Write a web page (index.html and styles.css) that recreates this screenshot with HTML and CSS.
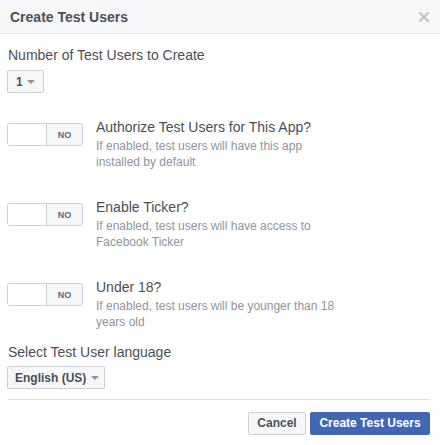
FILE: index.html
```html
<!DOCTYPE html>
<html>
<head>
<meta charset="utf-8">
<link rel="stylesheet" href="styles.css">
</head>
<body>
<div class="dialog">
  <div class="header">
    <div class="title">Create Test Users</div>
    <svg class="close" width="10" height="10" viewBox="0 0 10 10"><path d="M1 1L9 9M9 1L1 9" stroke="#bec2c9" stroke-width="2" stroke-linecap="square"/></svg>
  </div>
  <div class="content">
    <div class="label label-top">Number of Test Users to Create</div>
    <div class="select select-num"><span>1</span><span class="caret"></span></div>

    <div class="row row-first">
      <div class="toggle"><span class="t-off"></span><span class="t-no">NO</span></div>
      <div class="text">
        <div class="opt-title">Authorize Test Users for This App?</div>
        <div class="opt-desc">If enabled, test users will have this app installed by default</div>
      </div>
    </div>
    <div class="row">
      <div class="toggle"><span class="t-off"></span><span class="t-no">NO</span></div>
      <div class="text">
        <div class="opt-title">Enable Ticker?</div>
        <div class="opt-desc">If enabled, test users will have access to Facebook Ticker</div>
      </div>
    </div>
    <div class="row">
      <div class="toggle"><span class="t-off"></span><span class="t-no">NO</span></div>
      <div class="text">
        <div class="opt-title">Under 18?</div>
        <div class="opt-desc">If enabled, test users will be younger than 18 years old</div>
      </div>
    </div>

    <div class="label label-lang">Select Test User language</div>
    <div class="select select-lang"><span>English (US)</span><span class="caret"></span></div>
  </div>
  <div class="footer">
    <button class="btn btn-cancel">Cancel</button>
    <button class="btn btn-primary">Create Test Users</button>
  </div>
</div>
</body>
</html>
```
FILE: styles.css
```css
html, body {
  margin: 0;
  padding: 0;
  background: #fff;
}
body {
  font-family: "Liberation Sans", Arial, Helvetica, sans-serif;
  color: #4b4f56;
}
.dialog {
  width: 440px;
}
.header {
  height: 33px;
  background: #f6f7f9;
  border-bottom: 1px solid #e5e5e5;
  display: flex;
  align-items: center;
  justify-content: space-between;
  padding: 0 11px 0 10px;
}
.title {
  font-size: 14px;
  font-weight: bold;
  color: #4b4f56;
}
.close {
  display: block;
}
.content {
  padding: 12px 7px 0 7px;
}
.label {
  font-size: 14px;
  line-height: 18px;
  color: #4b4f56;
  padding-left: 1px;
}
.label-top {
  margin-bottom: 6px;
}
.label-lang {
  margin-top: 13px;
  margin-bottom: 5px;
}
.select {
  display: inline-flex;
  align-items: center;
  height: 21px;
  border: 1px solid #ccd0d5;
  border-radius: 2px;
  background: #f6f7f9;
  font-size: 12px;
  font-weight: bold;
  color: #4b4f56;
  white-space: nowrap;
  box-sizing: content-box;
}
.select-num {
  width: 26px;
  padding: 0 4px 0 5px;
  gap: 4px;
}
.select-num span:first-child {
  padding-left: 3px;
}
.select-lang {
  width: 83px;
  padding: 0 6px 0 7px;
  gap: 5px;
}
.caret {
  width: 0;
  height: 0;
  border-left: 4px solid transparent;
  border-right: 4px solid transparent;
  border-top: 4px solid #90949c;
  margin-top: 1px;
  flex: none;
}
.row {
  display: flex;
  gap: 13px;
  margin-top: 29px;
}
.row-first {
  margin-top: 26px;
}
.toggle {
  margin-top: 4px;
  width: 74px;
  height: 21px;
  border: 1px solid #ccd0d5;
  border-radius: 3px;
  display: flex;
  overflow: hidden;
  flex: none;
}
.t-off {
  width: 38px;
  background: #fff;
  border-right: 1px solid #ccd0d5;
}
.t-no {
  flex: 1;
  background: #f6f7f9;
  font-size: 9px;
  font-weight: bold;
  color: #606770;
  display: flex;
  align-items: center;
  justify-content: center;
}
.text {
  width: 245px;
}
.opt-title {
  font-size: 14px;
  line-height: 16px;
  color: #4b4f56;
  margin-bottom: 3px;
}
.opt-desc {
  font-size: 12px;
  line-height: 16px;
  color: #90949c;
}
.footer {
  margin: 10px 10px 0 8px;
  border-top: 1px solid #dddfe2;
  padding-top: 12px;
  display: flex;
  justify-content: flex-end;
  gap: 4px;
}
.btn {
  font-family: "Liberation Sans", Arial, Helvetica, sans-serif;
  font-size: 12px;
  font-weight: bold;
  height: 23px;
  border-radius: 2px;
  padding: 0 8px;
  margin: 0;
  line-height: 21px;
}
.btn-cancel {
  background: #f6f7f9;
  border: 1px solid #ced0d4;
  color: #4b4f56;
  width: 58px;
}
.btn-primary {
  background: #4267b2;
  border: 1px solid #4267b2;
  color: #fff;
  width: 120px;
}
```
